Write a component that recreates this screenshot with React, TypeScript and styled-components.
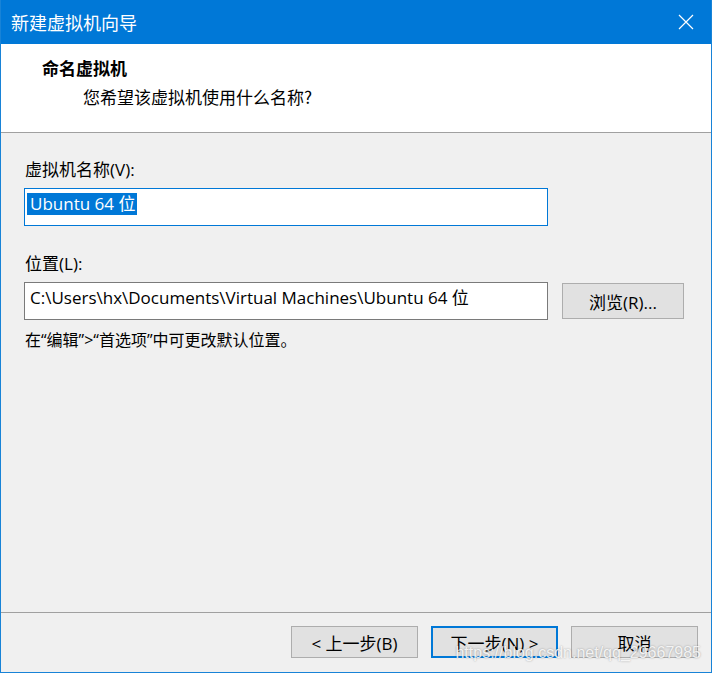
import React from "react";
import styled, { createGlobalStyle, css } from "styled-components";

const GlobalStyle = createGlobalStyle`
  html, body {
    margin: 0;
    padding: 0;
    background: #fff;
  }
  * {
    box-sizing: border-box;
  }
`;

const uiFont = `"Open Sans", "Noto Sans CJK SC", sans-serif`;

export default function App() {
  return (
    <>
      <GlobalStyle />
      <Window>
        <TitleBar>
          <TitleText>新建虚拟机向导</TitleText>
          <CloseBtn aria-label="关闭">
            <svg width="16" height="16" viewBox="0 0 16 16">
              <path d="M1 1 L15 15 M15 1 L1 15" stroke="#fff" strokeWidth="1.2" fill="none" />
            </svg>
          </CloseBtn>
        </TitleBar>

        <Header>
          <HeaderTitle>命名虚拟机</HeaderTitle>
          <HeaderSub>您希望该虚拟机使用什么名称?</HeaderSub>
        </Header>

        <Body>
          <Label>虚拟机名称(V):</Label>
          <Field focused>
            <Selected>Ubuntu 64 位</Selected>
          </Field>

          <Label spaced>位置(L):</Label>
          <FieldRow>
            <Field>C:\Users\hx\Documents\Virtual Machines\Ubuntu 64 位</Field>
            <Button width={122} height={36}>浏览(R)...</Button>
          </FieldRow>

          <Hint>在“编辑”&gt;“首选项”中可更改默认位置。</Hint>
        </Body>

        <Footer>
          <Button width={127} height={32}>&lt; 上一步(B)</Button>
          <Button width={127} height={32} primary>下一步(N) &gt;</Button>
          <Button width={127} height={32}>取消</Button>
        </Footer>

        <Watermark>https://blog.csdn.net/qq_29667985</Watermark>
      </Window>
    </>
  );
}

const Window = styled.div`
  position: relative;
  width: 712px;
  height: 673px;
  display: flex;
  flex-direction: column;
  background: #f0f0f0;
  border: 1px solid #1883d7;
  border-top: 0;
  font-family: ${uiFont};
  overflow: hidden;
`;

const TitleBar = styled.div`
  height: 44px;
  margin: 0 -1px;
  background: #0078d7;
  display: flex;
  align-items: center;
  justify-content: space-between;
  padding: 0 18px 0 11px;
`;

const TitleText = styled.span`
  color: #fff;
  font-size: 18px;
  font-family: "Noto Sans CJK SC", sans-serif;
`;

const CloseBtn = styled.div`
  display: flex;
  align-items: center;
  width: 16px;
  height: 16px;
`;

const Header = styled.div`
  height: 89px;
  background: #fff;
  border-bottom: 1px solid #a0a0a0;
  padding: 12px 0 0 41px;
  display: flex;
  flex-direction: column;
`;

const HeaderTitle = styled.div`
  font-size: 17px;
  font-weight: bold;
  color: #000;
  line-height: 24px;
  font-family: "Noto Sans CJK SC", sans-serif;
`;

const HeaderSub = styled.div`
  font-size: 17px;
  color: #000;
  line-height: 24px;
  margin: 5px 0 0 41px;
  font-family: "Noto Sans CJK SC", sans-serif;
`;

const Body = styled.div`
  flex: 1;
  padding: 25px 0 0 23px;
  display: flex;
  flex-direction: column;
  border-bottom: 1px solid #a0a0a0;
`;

const Label = styled.div<{ spaced?: boolean }>`
  font-size: 17px;
  line-height: 24px;
  color: #000;
  margin-top: ${(p) => (p.spaced ? "26px" : "0")};
  margin-bottom: 6px;
  padding-left: 1px;
`;

const FieldRow = styled.div`
  display: flex;
  align-items: center;
  gap: 14px;
`;

const Field = styled.div<{ focused?: boolean }>`
  width: 524px;
  height: 38px;
  background: #fff;
  border: 1px solid ${(p) => (p.focused ? "#0078d7" : "#7a7a7a")};
  padding: 4px 0 0 5px;
  font-size: 17px;
  line-height: 22px;
  color: #000;
  white-space: nowrap;
`;

const Selected = styled.span`
  display: inline-block;
  margin-left: -3px;
  padding: 0 2px 0 3px;
  background: #0078d7;
  color: #fff;
`;

const Hint = styled.div`
  margin-top: 8px;
  font-size: 16px;
  line-height: 24px;
  color: #000;
  padding-left: 1px;
`;

const Footer = styled.div`
  height: 59px;
  display: flex;
  justify-content: flex-end;
  align-items: flex-start;
  gap: 13px;
  padding: 13px 13px 0 0;
`;

const Button = styled.div<{ width: number; height: number; primary?: boolean }>`
  width: ${(p) => p.width}px;
  height: ${(p) => p.height}px;
  display: flex;
  align-items: center;
  justify-content: center;
  background: #e1e1e1;
  border: 1px solid #adadad;
  font-size: 17px;
  color: #000;
  white-space: nowrap;

  ${(p) =>
    p.primary &&
    css`
      border: 2px solid #0078d7;
    `}
`;

const Watermark = styled.div`
  position: absolute;
  right: 10px;
  bottom: 10px;
  font-family: "Liberation Sans", sans-serif;
  font-size: 16px;
  color: rgba(255, 255, 255, 0.85);
  text-shadow: 0 0 2px rgba(0, 0, 0, 0.35);
  pointer-events: none;
`;
